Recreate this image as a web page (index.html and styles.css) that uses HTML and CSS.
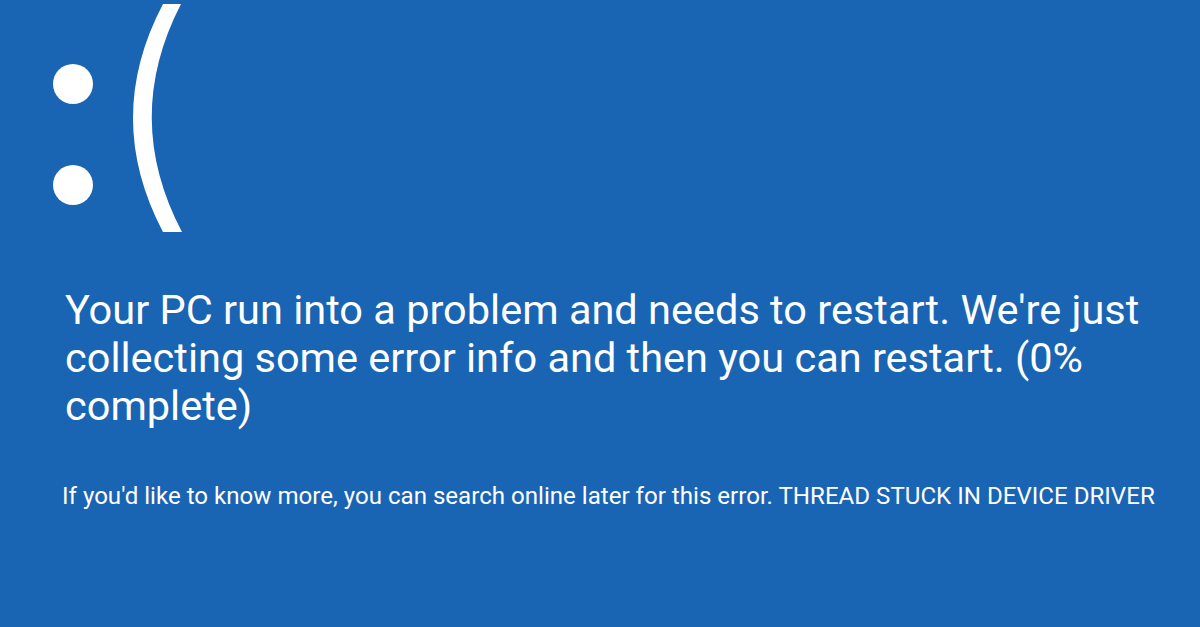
FILE: index.html
```html
<!DOCTYPE html>
<html lang="en">
<head>
  <meta charset="UTF-8" />
  <title>Stop error</title>
  <link rel="stylesheet" href="styles.css">
</head>
<body>
  <div class="screen">
    <svg class="face" width="190" height="240" viewBox="0 0 190 240" aria-label=":(">
      <circle cx="73" cy="84" r="20" fill="#fff" />
      <circle cx="73" cy="185" r="20" fill="#fff" />
      <path d="M163 4 L181 4 Q122 118 182 232 L163 232 Q103 118 163 4 Z" fill="#fff" />
    </svg>
    <p class="message">Your PC run into a problem and needs to restart. We're just collecting some error info and then you can restart. (0% complete)</p>
    <p class="details">If you'd like to know more, you can search online later for this error. THREAD STUCK IN DEVICE DRIVER</p>
  </div>
</body>
</html>
```

FILE: styles.css
```css
html, body {
  margin: 0;
  height: 100%;
}

body {
  background: #1964b3;
  color: #fff;
  font-family: Roboto, "Liberation Sans", sans-serif;
  overflow: hidden;
}

.screen {
  display: flex;
  flex-direction: column;
  align-items: flex-start;
}

.face {
  display: block;
}

.message {
  margin: 46px 0 0 65px;
  width: 1100px;
  font-size: 41.5px;
  line-height: 48px;
}

.details {
  margin: 52px 0 0 62px;
  font-size: 24.1px;
  line-height: 28px;
}
```
